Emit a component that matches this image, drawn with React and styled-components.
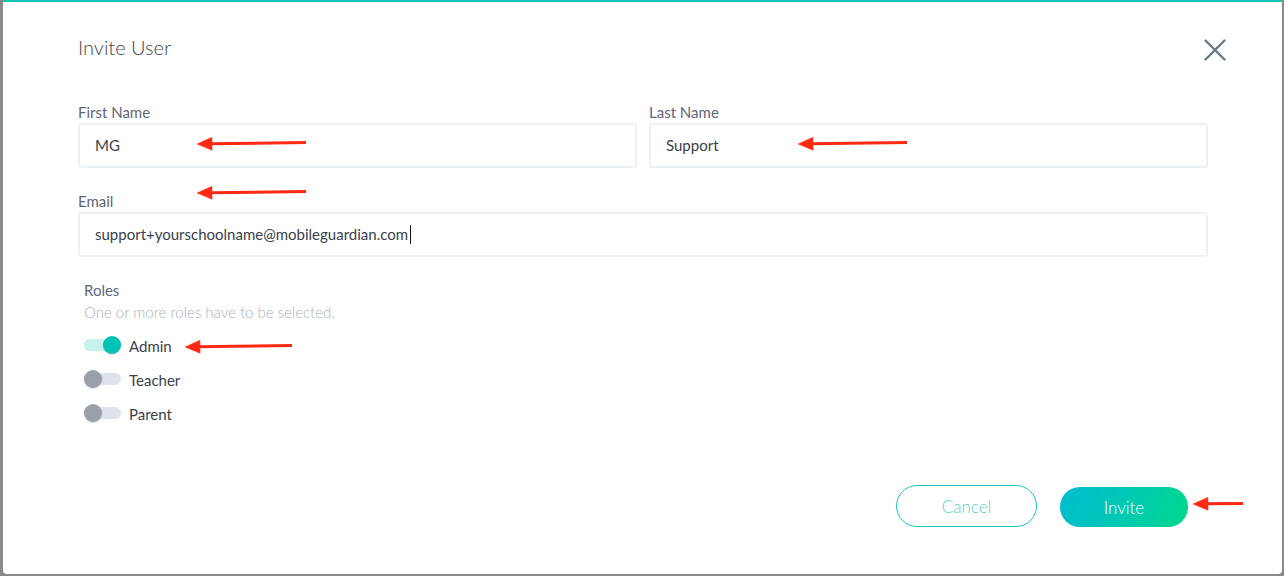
import React from "react";
import styled, { createGlobalStyle } from "styled-components";

const Global = createGlobalStyle`
  html, body { margin: 0; padding: 0; }
  body { font-family: "Lato", "Open Sans", sans-serif; background: #8a8a8a; }
  * { box-sizing: border-box; }
`;

const Backdrop = styled.div`
  position: relative;
  width: 1284px;
  height: 576px;
  background: #8a8a8a;
  padding: 0 2px 2px 3px;
  display: flex;
`;

const Dialog = styled.div`
  flex: 1;
  background: #fff;
  border-top: 2px solid #14c4b7;
  border-radius: 0 0 4px 4px;
  padding: 33px 74px 0 75px;
  display: flex;
  flex-direction: column;
`;

const Header = styled.div`
  display: flex;
  align-items: center;
  justify-content: space-between;
  height: 24px;
`;

const Title = styled.h2`
  margin: 0;
  font-size: 20px;
  font-weight: 300;
  color: #3d4451;
  line-height: 24px;
`;

const Close = styled.button`
  width: 24px;
  height: 24px;
  margin-right: -19px;
  margin-top: 6px;
  padding: 0;
  border: 0;
  background: none;
  display: flex;
  align-items: center;
  justify-content: center;
`;

const Row = styled.div`
  display: flex;
  gap: 12px;
  margin-top: ${(p) => p.$top}px;
`;

const Field = styled.div`
  flex: 1;
  display: flex;
  flex-direction: column;
`;

const Label = styled.label`
  font-size: 15px;
  line-height: 18px;
  color: #5f6678;
  margin-bottom: 2px;
`;

const Input = styled.div`
  height: 45px;
  border: 2px solid #edf0f5;
  border-radius: 3px;
  padding: 0 15px;
  display: flex;
  align-items: center;
  font-size: 15px;
  color: #3a404d;
  padding-bottom: 1px;
`;

const Caret = styled.span`
  display: inline-block;
  width: 1px;
  height: 19px;
  background: #111;
  margin-left: 2px;
`;

const Roles = styled.div`
  margin-top: 24px;
  padding-left: 6px;
  display: flex;
  flex-direction: column;
`;

const RolesTitle = styled.div`
  font-size: 15px;
  line-height: 18px;
  color: #5f6678;
`;

const Hint = styled.div`
  font-size: 15px;
  line-height: 18px;
  font-weight: 300;
  color: #aab1be;
  margin-top: 4px;
  margin-bottom: 7px;
`;

const RoleRow = styled.div`
  display: flex;
  align-items: center;
  height: 34px;
  gap: 8px;
`;

const Track = styled.div`
  position: relative;
  width: 37px;
  height: 12px;
  border-radius: 6px;
  background: ${(p) => (p.$on ? "#c6f1ec" : "#dde2ec")};
`;

const Knob = styled.div`
  position: absolute;
  top: -3px;
  left: ${(p) => (p.$on ? "19px" : "0")};
  width: 18px;
  height: 18px;
  border-radius: 50%;
  background: ${(p) => (p.$on ? "#00c2b5" : "#98a1ab")};
  box-shadow: 0 1px 2px rgba(0, 0, 0, 0.15);
`;

const RoleName = styled.span`
  font-size: 15px;
  color: #3a404d;
  padding-top: 1px;
`;

const Actions = styled.div`
  margin-top: auto;
  margin-bottom: 47px;
  padding-right: 20px;
  display: flex;
  justify-content: flex-end;
  align-items: center;
  gap: 23px;
`;

const CancelBtn = styled.button`
  width: 141px;
  height: 42px;
  border-radius: 21px;
  border: 1px solid #1dc6c0;
  background: #fff;
  color: #58d3cb;
  font-family: inherit;
  font-size: 17px;
  font-weight: 300;
`;

const InviteBtn = styled.button`
  width: 128px;
  height: 40px;
  border-radius: 20px;
  border: 0;
  background: linear-gradient(110deg, #00bccf 0%, #00c9b4 50%, #00d88a 100%);
  color: #fff;
  font-family: inherit;
  font-size: 17px;
  font-weight: 300;
  margin-top: 2px;
`;

const Annotations = styled.svg`
  position: absolute;
  left: 0;
  top: 0;
  pointer-events: none;
`;

const arrows = [
  { tip: [197, 144], tail: [306, 142.5] },
  { tip: [798, 144], tail: [907, 142.5] },
  { tip: [197, 193], tail: [306, 191.5] },
  { tip: [185, 347], tail: [292, 345.5] },
  { tip: [1193, 504], tail: [1243, 503.5] },
];

function Arrow({ tip, tail }) {
  const [tx, ty] = tip;
  const [ex, ey] = tail;
  const dx = ex - tx;
  const dy = ey - ty;
  const len = Math.hypot(dx, dy);
  const ux = dx / len;
  const uy = dy / len;
  const hx = tx + ux * 15;
  const hy = ty + uy * 15;
  const px = -uy * 6.5;
  const py = ux * 6.5;
  return (
    <g fill="#ff2a14" stroke="#ff2a14">
      <line x1={hx - ux * 2} y1={hy - uy * 2} x2={ex} y2={ey} strokeWidth="3" />
      <polygon points={`${tx},${ty} ${hx + px},${hy + py} ${hx - px},${hy - py}`} strokeWidth="0.5" />
    </g>
  );
}

const roles = [
  { name: "Admin", on: true },
  { name: "Teacher", on: false },
  { name: "Parent", on: false },
];

export default function App() {
  return (
    <>
      <Global />
      <Backdrop>
        <Dialog>
          <Header>
            <Title>Invite User</Title>
            <Close aria-label="Close">
              <svg width="22" height="22" viewBox="0 0 22 22">
                <path d="M1.5 1.5 L20.5 20.5 M20.5 1.5 L1.5 20.5" stroke="#6b7886" strokeWidth="2.4" strokeLinecap="round" />
              </svg>
            </Close>
          </Header>
          <Row $top={44}>
            <Field>
              <Label>First Name</Label>
              <Input>MG</Input>
            </Field>
            <Field>
              <Label>Last Name</Label>
              <Input>Support</Input>
            </Field>
          </Row>
          <Row $top={24}>
            <Field>
              <Label>Email</Label>
              <Input>
                support+yourschoolname@mobileguardian.com
                <Caret />
              </Input>
            </Field>
          </Row>
          <Roles>
            <RolesTitle>Roles</RolesTitle>
            <Hint>One or more roles have to be selected.</Hint>
            {roles.map((r) => (
              <RoleRow key={r.name}>
                <Track $on={r.on}>
                  <Knob $on={r.on} />
                </Track>
                <RoleName>{r.name}</RoleName>
              </RoleRow>
            ))}
          </Roles>
          <Actions>
            <CancelBtn>Cancel</CancelBtn>
            <InviteBtn>Invite</InviteBtn>
          </Actions>
        </Dialog>
        <Annotations width="1284" height="576" viewBox="0 0 1284 576">
          {arrows.map((a, i) => (
            <Arrow key={i} {...a} />
          ))}
        </Annotations>
      </Backdrop>
    </>
  );
}
